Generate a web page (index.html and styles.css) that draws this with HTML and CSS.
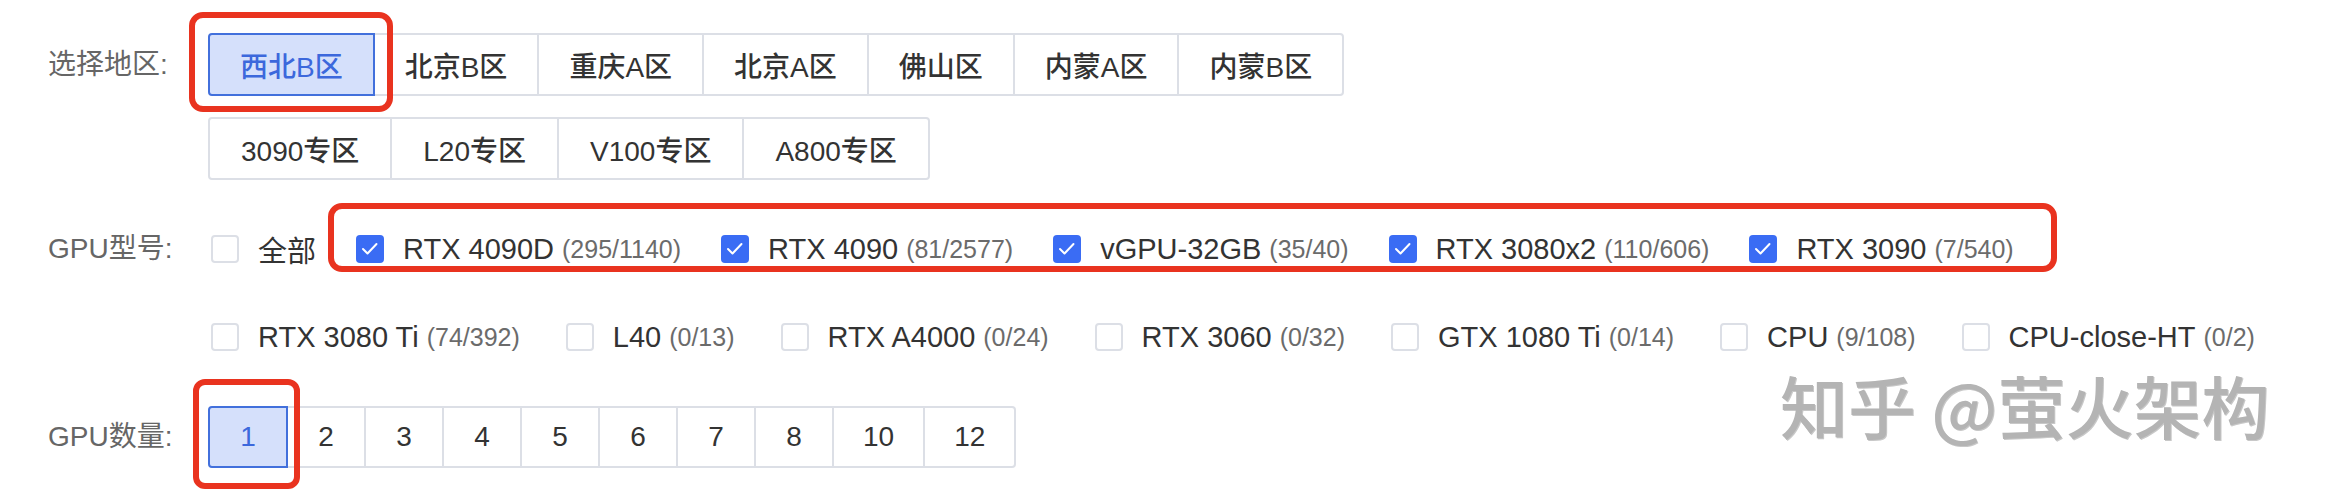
FILE: index.html
```html
<!DOCTYPE html>
<html lang="zh-CN">
<head>
<meta charset="utf-8">
<title>GPU 选择</title>
<link rel="stylesheet" href="styles.css">
</head>
<body>
<div class="page">
  <div class="form-row">
    <div class="label label-tall">选择地区:</div>
    <div class="groups">
      <div class="seg-group">
        <span class="seg-btn is-active">西北B区</span>
        <span class="seg-btn">北京B区</span>
        <span class="seg-btn">重庆A区</span>
        <span class="seg-btn">北京A区</span>
        <span class="seg-btn">佛山区</span>
        <span class="seg-btn">内蒙A区</span>
        <span class="seg-btn">内蒙B区</span>
      </div>
      <div class="seg-group zone-group">
        <span class="seg-btn">3090专区</span>
        <span class="seg-btn">L20专区</span>
        <span class="seg-btn">V100专区</span>
        <span class="seg-btn">A800专区</span>
      </div>
    </div>
  </div>

  <div class="form-row gpu-row">
    <div class="label label-line">GPU型号:</div>
    <div class="check-lines">
      <div class="check-line">
        <span class="check"><span class="box"></span><span class="name">全部</span></span>
        <span class="check is-checked"><span class="box"><svg viewBox="0 0 28 28"><path d="M7 14l4.5 4.5L20.5 9"/></svg></span><span class="name">RTX 4090D</span><span class="count">(295/1140)</span></span>
        <span class="check is-checked"><span class="box"><svg viewBox="0 0 28 28"><path d="M7 14l4.5 4.5L20.5 9"/></svg></span><span class="name">RTX 4090</span><span class="count">(81/2577)</span></span>
        <span class="check is-checked"><span class="box"><svg viewBox="0 0 28 28"><path d="M7 14l4.5 4.5L20.5 9"/></svg></span><span class="name">vGPU-32GB</span><span class="count">(35/40)</span></span>
        <span class="check is-checked"><span class="box"><svg viewBox="0 0 28 28"><path d="M7 14l4.5 4.5L20.5 9"/></svg></span><span class="name">RTX 3080x2</span><span class="count">(110/606)</span></span>
        <span class="check is-checked"><span class="box"><svg viewBox="0 0 28 28"><path d="M7 14l4.5 4.5L20.5 9"/></svg></span><span class="name">RTX 3090</span><span class="count">(7/540)</span></span>
      </div>
      <div class="check-line check-line-wide">
        <span class="check"><span class="box"></span><span class="name">RTX 3080 Ti</span><span class="count">(74/392)</span></span>
        <span class="check"><span class="box"></span><span class="name">L40</span><span class="count">(0/13)</span></span>
        <span class="check"><span class="box"></span><span class="name">RTX A4000</span><span class="count">(0/24)</span></span>
        <span class="check"><span class="box"></span><span class="name">RTX 3060</span><span class="count">(0/32)</span></span>
        <span class="check"><span class="box"></span><span class="name">GTX 1080 Ti</span><span class="count">(0/14)</span></span>
        <span class="check"><span class="box"></span><span class="name">CPU</span><span class="count">(9/108)</span></span>
        <span class="check"><span class="box"></span><span class="name">CPU-close-HT</span><span class="count">(0/2)</span></span>
      </div>
    </div>
  </div>

  <div class="form-row count-row">
    <div class="label label-num">GPU数量:</div>
    <div class="seg-group num-group">
      <span class="seg-btn num is-active">1</span>
      <span class="seg-btn num">2</span>
      <span class="seg-btn num">3</span>
      <span class="seg-btn num">4</span>
      <span class="seg-btn num">5</span>
      <span class="seg-btn num">6</span>
      <span class="seg-btn num">7</span>
      <span class="seg-btn num">8</span>
      <span class="seg-btn num">10</span>
      <span class="seg-btn num">12</span>
    </div>
  </div>

  <div class="annot annot-region"></div>
  <div class="annot annot-gpu"></div>
  <div class="annot annot-num"></div>
  <div class="watermark">知乎 @萤火架构</div>
</div>
</body>
</html>
```

FILE: styles.css
```css
* { box-sizing: border-box; }

html, body {
  margin: 0;
  padding: 0;
  background: #ffffff;
}

body {
  font-family: "Liberation Sans", "Noto Sans CJK SC", sans-serif;
  color: #333333;
  width: 2350px;
  height: 504px;
  overflow: hidden;
}

.page {
  position: relative;
  width: 2350px;
  height: 504px;
  padding: 33px 0 0 48px;
}

.form-row {
  display: flex;
  align-items: flex-start;
}

.label {
  width: 160px;
  flex: none;
  font-size: 28px;
  color: #666666;
  white-space: nowrap;
}

.label-tall { height: 63px; line-height: 63px; }
.label-line { height: 40px; line-height: 40px; }
.label-num { height: 62px; line-height: 62px; }

.groups {
  display: flex;
  flex-direction: column;
  gap: 21px;
}

.seg-group {
  display: flex;
}

.seg-btn {
  position: relative;
  display: flex;
  align-items: center;
  justify-content: center;
  height: 63px;
  padding: 0 30px;
  border: 2px solid #dcdfe6;
  background: #ffffff;
  font-size: 28px;
  font-weight: 500;
  color: #333333;
  white-space: nowrap;
}

.zone-group .seg-btn { padding: 0 31px; }

.seg-btn + .seg-btn { margin-left: -2px; }
.seg-btn:first-child { border-radius: 4px 0 0 4px; }
.seg-btn:last-child { border-radius: 0 4px 4px 0; }

.seg-btn.is-active {
  z-index: 1;
  background: #d5e0fb;
  border-color: #4270dc;
  color: #3c68dc;
}

.gpu-row { margin-top: 49px; }

.check-lines {
  display: flex;
  flex-direction: column;
  gap: 48px;
  padding-left: 3px;
}

.check-line {
  display: flex;
  align-items: center;
  gap: 40px;
  height: 40px;
}

.check-line-wide { gap: 46px; }

.check {
  display: flex;
  align-items: center;
  white-space: nowrap;
}

.box {
  width: 28px;
  height: 28px;
  flex: none;
  border: 2px solid #dcdfe6;
  border-radius: 4px;
  background: #ffffff;
  margin-right: 19px;
  display: flex;
}

.box svg {
  width: 100%;
  height: 100%;
}

.box path {
  fill: none;
  stroke: #ffffff;
  stroke-width: 2;
  stroke-linecap: round;
  stroke-linejoin: round;
}

.is-checked .box {
  background: #3a6cf4;
  border: none;
}

.name {
  font-size: 29px;
  color: #333333;
}

.count {
  font-size: 25px;
  color: #6b6b6b;
  margin-left: 8px;
}

.count-row { margin-top: 49px; }

.seg-btn.num {
  height: 62px;
  min-width: 80px;
  padding: 0 29px;
}

.annot {
  position: absolute;
  border: 6px solid #e9331f;
  border-radius: 14px;
  pointer-events: none;
}

.annot-region { left: 189px; top: 12px; width: 204px; height: 100px; }
.annot-gpu { left: 328px; top: 203px; width: 1729px; height: 69px; }
.annot-num { left: 193px; top: 379px; width: 107px; height: 110px; border-radius: 12px; }

.watermark {
  position: absolute;
  left: 1780px;
  top: 371px;
  font-family: "Noto Sans CJK SC", sans-serif;
  font-size: 68px;
  line-height: 68px;
  font-weight: 500;
  color: #b4b4b4;
  white-space: nowrap;
  text-shadow: 1px 1px 0 #c8c8c8;
}
```
